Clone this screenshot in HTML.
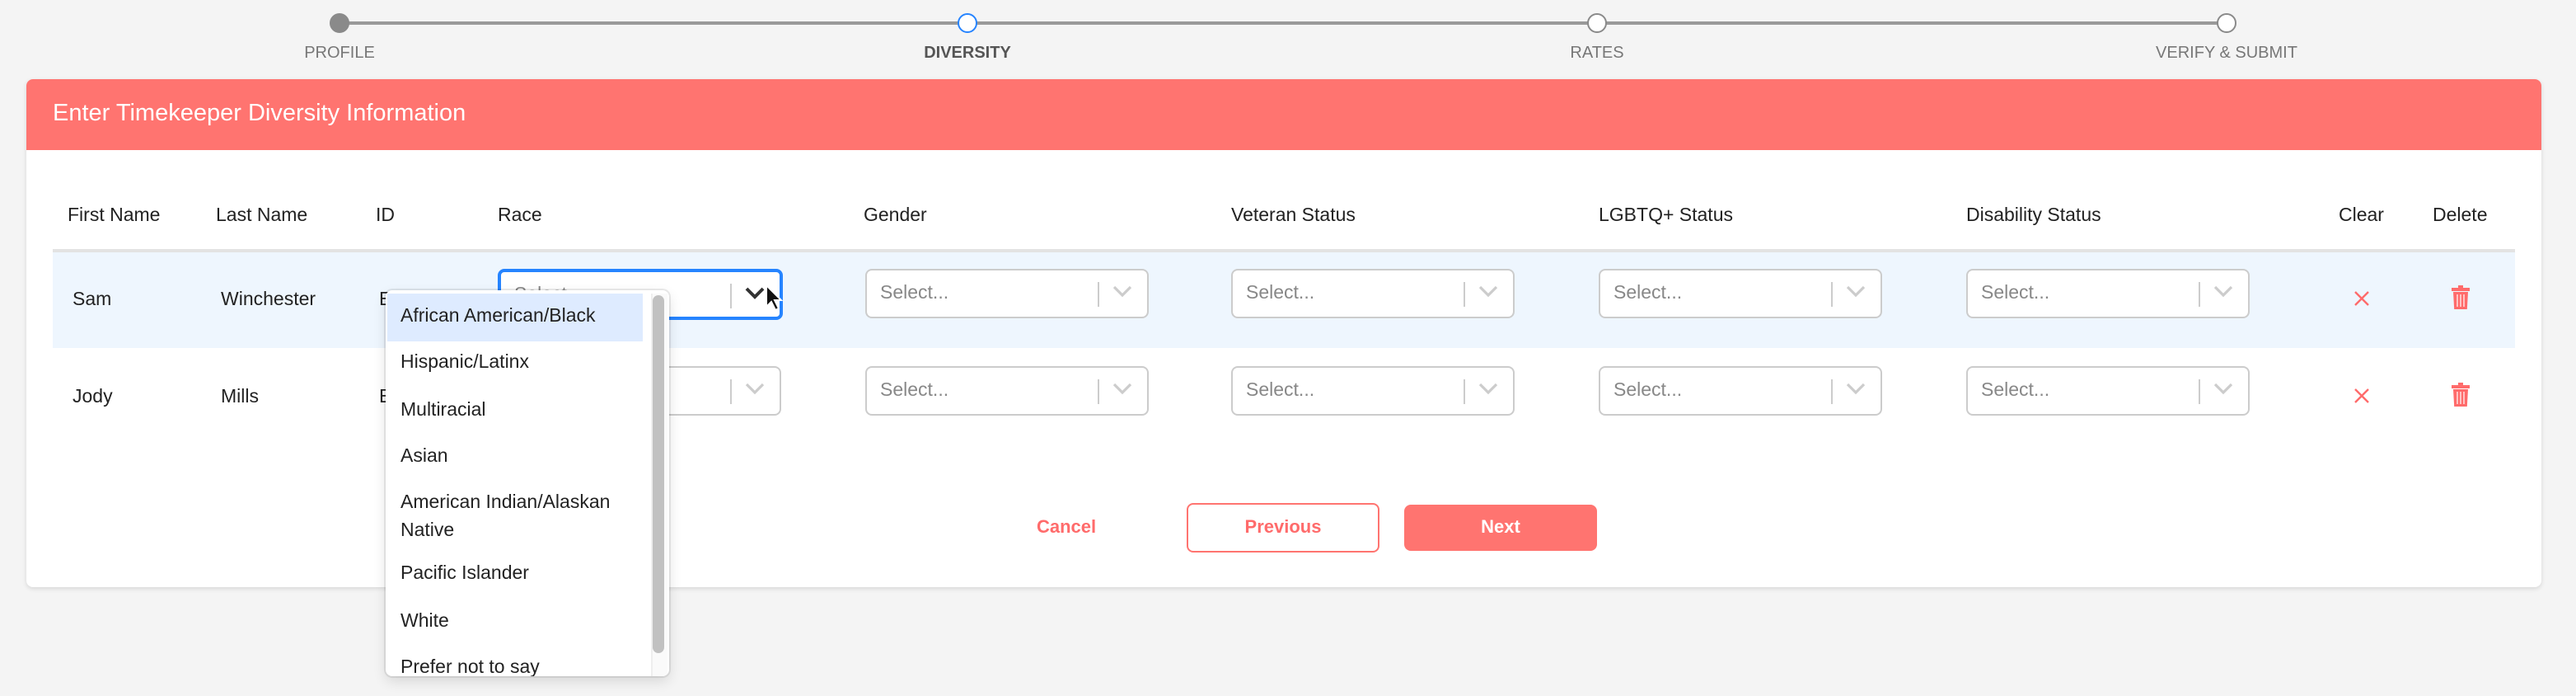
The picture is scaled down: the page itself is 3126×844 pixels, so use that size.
<!DOCTYPE html>
<html><head><meta charset="utf-8"><style>
html,body{margin:0;padding:0;width:3126px;height:844px;overflow:hidden;background:#f4f4f4}
#w{position:absolute;left:0;top:0;width:1563px;height:422px;transform:scale(2);transform-origin:0 0;font-family:"Liberation Sans",sans-serif;color:#222}
.a{position:absolute;white-space:nowrap}
.lbl{font-size:10px;color:#777;transform:translateX(-50%)}
.dot{position:absolute;width:10px;height:10px;border-radius:50%;border:1.5px solid #8a8a8a;background:#fff;top:8px;margin-left:-6.5px}
.th{font-size:11.5px;top:125px;color:#222}
.td{font-size:11.5px;color:#222}
.sel{position:absolute;width:170px;height:28px;border:1px solid #ccc;border-radius:4px;background:#fff}
.sel span{position:absolute;left:8px;top:8px;font-size:11.5px;color:#888}
.sel i{position:absolute;right:29px;top:7px;width:1px;height:15px;background:#ccc}
.sel svg{position:absolute;right:9px;top:9px}
.opt{position:absolute;left:9px;font-size:11.5px;color:#222}
</style></head><body><div id="w">
<div class="a" style="left:206px;top:13px;width:1145px;height:2px;background:#999"></div>
<div class="dot" style="left:206px;background:#8a8a8a"></div>
<div class="dot" style="left:587px;border-color:#2684ff"></div>
<div class="dot" style="left:969px"></div>
<div class="dot" style="left:1351px"></div>
<div class="a lbl" style="left:206px;top:27px">PROFILE</div>
<div class="a lbl" style="left:587px;top:27px;font-weight:bold;color:#555">DIVERSITY</div>
<div class="a lbl" style="left:969px;top:27px">RATES</div>
<div class="a lbl" style="left:1351px;top:27px">VERIFY &amp; SUBMIT</div>

<div class="a" style="left:16px;top:48px;width:1526px;height:308px;background:#fff;border-radius:4px;box-shadow:0 1px 3px rgba(0,0,0,.12);overflow:hidden">
<div style="height:43px;background:#ff7470;color:#fff;font-size:14.5px;line-height:43px;padding-left:16px">Enter Timekeeper Diversity Information</div>
</div>
<div class="a th" style="left:41px">First Name</div>
<div class="a th" style="left:131px">Last Name</div>
<div class="a th" style="left:228px">ID</div>
<div class="a th" style="left:302px">Race</div>
<div class="a th" style="left:524px">Gender</div>
<div class="a th" style="left:747px">Veteran Status</div>
<div class="a th" style="left:970px">LGBTQ+ Status</div>
<div class="a th" style="left:1193px">Disability Status</div>
<div class="a th" style="left:1419px">Clear</div>
<div class="a th" style="left:1476px">Delete</div>
<div class="a" style="left:32px;top:151px;width:1494px;height:2px;background:#e3e3e3"></div>
<div class="a" style="left:32px;top:153px;width:1494px;height:58px;background:#eef6fe"></div>

<div class="a td" style="left:44px;top:176px">Sam</div>
<div class="a td" style="left:134px;top:176px">Winchester</div>
<div class="a td" style="left:230px;top:176px">E</div>
<div class="a td" style="left:44px;top:235px">Jody</div>
<div class="a td" style="left:134px;top:235px">Mills</div>
<div class="a td" style="left:230px;top:235px">E</div>

<div class="sel" style="left:302px;top:163px;border:2px solid #2684ff;width:169px;height:27px"><span>Select...</span><i></i><svg width="12" height="8" viewBox="0 0 12 8"><path d="M1 1l5 5 5-5" fill="none" stroke="#333" stroke-width="2"/></svg></div>
<div class="sel" style="left:302px;top:222px"><span>Select...</span><i></i><svg width="12" height="8" viewBox="0 0 12 8"><path d="M1 1l5 5 5-5" fill="none" stroke="#ccc" stroke-width="1.6"/></svg></div>

<div class="sel" style="left:525px;top:163px"><span>Select...</span><i></i><svg width="12" height="8" viewBox="0 0 12 8"><path d="M1 1l5 5 5-5" fill="none" stroke="#ccc" stroke-width="1.6"/></svg></div>
<div class="sel" style="left:747px;top:163px"><span>Select...</span><i></i><svg width="12" height="8" viewBox="0 0 12 8"><path d="M1 1l5 5 5-5" fill="none" stroke="#ccc" stroke-width="1.6"/></svg></div>
<div class="sel" style="left:970px;top:163px"><span>Select...</span><i></i><svg width="12" height="8" viewBox="0 0 12 8"><path d="M1 1l5 5 5-5" fill="none" stroke="#ccc" stroke-width="1.6"/></svg></div>
<div class="sel" style="left:1193px;top:163px"><span>Select...</span><i></i><svg width="12" height="8" viewBox="0 0 12 8"><path d="M1 1l5 5 5-5" fill="none" stroke="#ccc" stroke-width="1.6"/></svg></div>
<div class="sel" style="left:525px;top:222px"><span>Select...</span><i></i><svg width="12" height="8" viewBox="0 0 12 8"><path d="M1 1l5 5 5-5" fill="none" stroke="#ccc" stroke-width="1.6"/></svg></div>
<div class="sel" style="left:747px;top:222px"><span>Select...</span><i></i><svg width="12" height="8" viewBox="0 0 12 8"><path d="M1 1l5 5 5-5" fill="none" stroke="#ccc" stroke-width="1.6"/></svg></div>
<div class="sel" style="left:970px;top:222px"><span>Select...</span><i></i><svg width="12" height="8" viewBox="0 0 12 8"><path d="M1 1l5 5 5-5" fill="none" stroke="#ccc" stroke-width="1.6"/></svg></div>
<div class="sel" style="left:1193px;top:222px"><span>Select...</span><i></i><svg width="12" height="8" viewBox="0 0 12 8"><path d="M1 1l5 5 5-5" fill="none" stroke="#ccc" stroke-width="1.6"/></svg></div>

<svg class="a" style="left:1428px;top:176px" width="10" height="10" viewBox="0 0 10 10"><path d="M1 1l8 8M9 1l-8 8" stroke="#ff6b6b" stroke-width="1.2"/></svg>
<svg class="a" style="left:1428px;top:235px" width="10" height="10" viewBox="0 0 10 10"><path d="M1 1l8 8M9 1l-8 8" stroke="#ff6b6b" stroke-width="1.2"/></svg>
<svg class="a" style="left:1487px;top:173px" width="12" height="15" viewBox="0 0 12 15"><path d="M4.5 0h3v1.5h4v2H.5v-2h4z" fill="#ff6b6b"/><path d="M1.5 4h9l-.6 10.5H2.1z" fill="#ff6b6b"/><path d="M4 5.5v7.5M6 5.5v7.5M8 5.5v7.5" stroke="#fff" stroke-width=".6"/></svg>
<svg class="a" style="left:1487px;top:232px" width="12" height="15" viewBox="0 0 12 15"><path d="M4.5 0h3v1.5h4v2H.5v-2h4z" fill="#ff6b6b"/><path d="M1.5 4h9l-.6 10.5H2.1z" fill="#ff6b6b"/><path d="M4 5.5v7.5M6 5.5v7.5M8 5.5v7.5" stroke="#fff" stroke-width=".6"/></svg>

<div class="a" style="left:629px;top:314px;font-size:11px;font-weight:bold;color:#ff6b6b">Cancel</div>
<div class="a" style="left:720px;top:305px;width:115px;height:28px;border:1px solid #ff7470;border-radius:4px;background:#fff;text-align:center;line-height:28px;font-size:11px;font-weight:bold;color:#ff6b6b">Previous</div>
<div class="a" style="left:852px;top:306px;width:117px;height:28px;border-radius:4px;background:#ff7470;text-align:center;line-height:28px;font-size:11px;font-weight:bold;color:#fff">Next</div>

<div class="a" style="left:234px;top:176px;width:172px;height:234px;background:#fff;border-radius:4px;box-shadow:0 0 0 1px rgba(0,0,0,.08),0 3px 8px rgba(0,0,0,.12);overflow:hidden">
<div class="a" style="left:1px;top:2px;width:155px;height:29px;background:#deebff"></div>
<div class="a" style="left:161px;top:2px;width:9px;height:232px;background:#fafafa;border-left:1px solid #eee"></div>
<div class="a" style="left:162px;top:3px;width:7px;height:217px;background:#c1c1c1;border-radius:4px"></div>
<div class="opt" style="top:10px">African American/Black</div>
<div class="opt" style="top:38px">Hispanic/Latinx</div>
<div class="opt" style="top:67px">Multiracial</div>
<div class="opt" style="top:95px">Asian</div>
<div class="opt" style="top:121px;line-height:17px">American Indian/Alaskan<br>Native</div>
<div class="opt" style="top:166px">Pacific Islander</div>
<div class="opt" style="top:195px">White</div>
<div class="opt" style="top:223px">Prefer not to say</div>
</div>
<svg class="a" style="left:464px;top:172px" width="11" height="17" viewBox="0 0 11 17"><path d="M1 1v13l3-3 2.5 5 2-1-2.5-5h4z" fill="#111" stroke="#fff" stroke-width="1"/></svg>
</div></body></html>
